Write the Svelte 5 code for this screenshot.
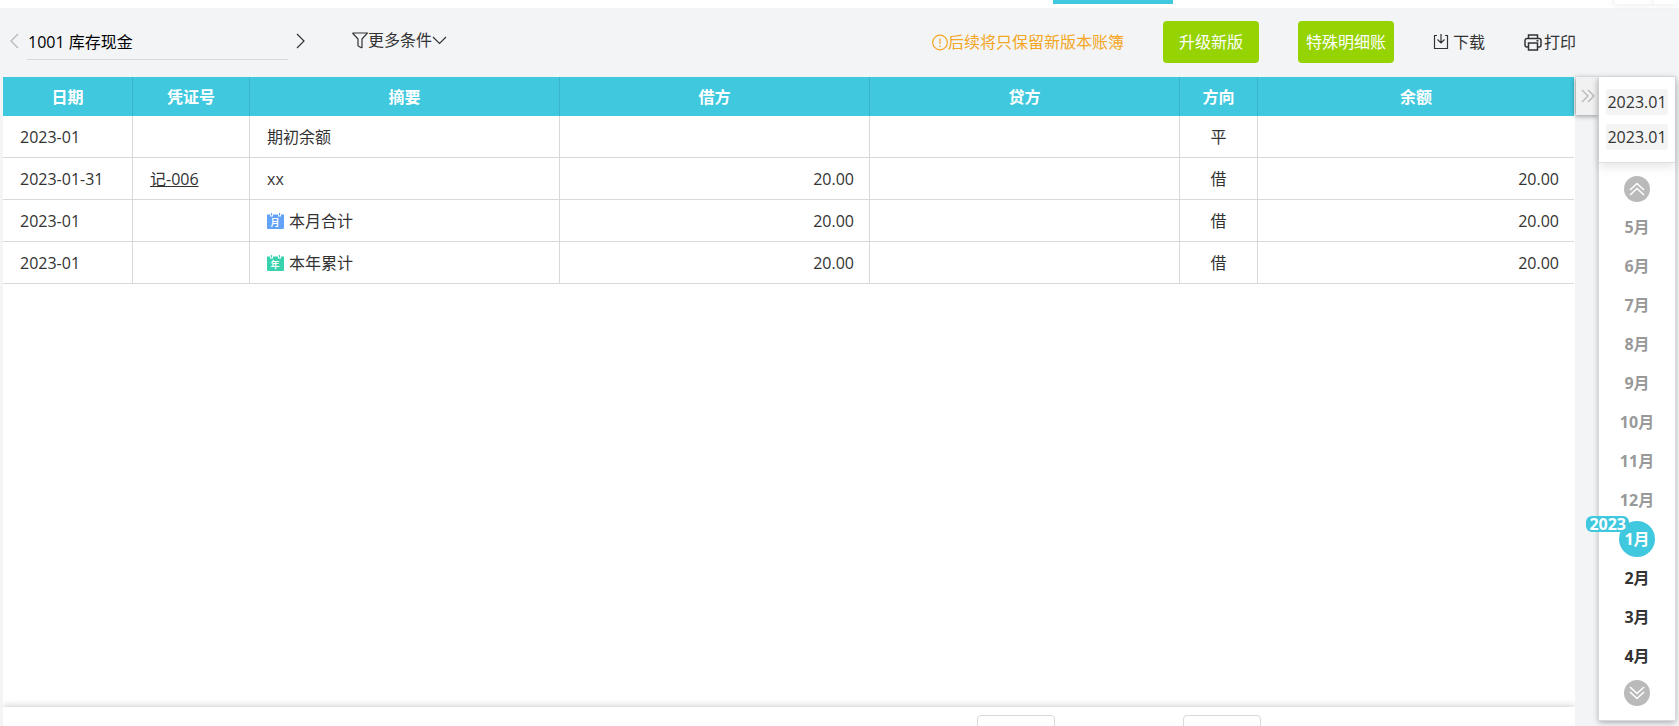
<script lang="ts">
    type Row = {
        date: string;
        voucher?: string;
        summary: string;
        badge?: "monthly" | "yearly";
        debit?: string;
        credit?: string;
        direction: string;
        balance?: string;
    };

    const rows: Row[] = [
        { date: "2023-01", summary: "期初余额", direction: "平" },
        { date: "2023-01-31", voucher: "记-006", summary: "xx", debit: "20.00", direction: "借", balance: "20.00" },
        { date: "2023-01", summary: "本月合计", badge: "monthly", debit: "20.00", direction: "借", balance: "20.00" },
        { date: "2023-01", summary: "本年累计", badge: "yearly", debit: "20.00", direction: "借", balance: "20.00" },
    ];

    const months = [5, 6, 7, 8, 9, 10, 11, 12, 1, 2, 3, 4];

    let account = $state("1001 库存现金");
    let activeMonth = $state(1);
    let railOpen = $state(true);
</script>

<div class="page">
    <div class="tabs">
        <span class="tab-line"></span>
        <span class="tab-edge"></span>
        <span class="tab-edge last"></span>
    </div>

    <header class="toolbar">
        <button class="icon-button muted" aria-label="上一个科目">
            <svg width="10" height="16" viewBox="0 0 10 16"><path d="M9 1 2 8l7 7" /></svg>
        </button>
        <input class="account" type="text" aria-label="科目" bind:value={account} />
        <button class="icon-button" aria-label="下一个科目">
            <svg width="10" height="16" viewBox="0 0 10 16"><path d="m1 1 7 7-7 7" /></svg>
        </button>
        <button class="filter">
            <svg width="16" height="17" viewBox="0 0 16 17"><path d="M.5 1h15L10 7v9M.5 1 6 7v7M6 14l4 2" /></svg>
            <span>更多条件</span>
            <svg width="15" height="9" viewBox="0 0 15 9"><path d="m1 1 6.500 6.500L14 1" /></svg>
        </button>

        <div class="actions">
            <span class="notice">
                <svg width="16" height="17" viewBox="0 0 16 17">
                    <circle cx="8" cy="8.500" r="7.300" />
                    <path d="M8 4.500v5.500M8 11.500v1.500" />
                </svg>
                <span>后续将只保留新版本账簿</span>
            </span>
            <button class="primary">升级新版</button>
            <button class="primary">特殊明细账</button>
            <button class="action download">
                <svg width="16" height="16" viewBox="0 0 16 16">
                    <path d="M4 1.500H1.500v13h13v-13H12M8 0v9M4.500 5.500 8 9l3.500-3.500" />
                </svg>
                <span>下载</span>
            </button>
            <button class="action print">
                <svg width="18" height="17" viewBox="0 0 18 17">
                    <path d="M4.500 4.500V1h9v3.500M4.500 13H3a2 2 0 0 1-2-2V6.500a2 2 0 0 1 2-2h12a2 2 0 0 1 2 2V11a2 2 0 0 1-2 2h-1.500M4.500 9h9v7h-9zM12.500 6.800h2" />
                </svg>
                <span>打印</span>
            </button>
        </div>
    </header>

    <div class="body">
        <main class="ledger">
            <div class="table-wrap">
                <table>
                    <colgroup>
                        <col class="col-date" />
                        <col class="col-voucher" />
                        <col class="col-wide" />
                        <col class="col-wide" />
                        <col class="col-wide" />
                        <col class="col-direction" />
                        <col />
                    </colgroup>
                    <thead>
                        <tr>
                            <th>日期</th>
                            <th>凭证号</th>
                            <th>摘要</th>
                            <th>借方</th>
                            <th>贷方</th>
                            <th>方向</th>
                            <th>余额</th>
                        </tr>
                    </thead>
                    <tbody>
                        {#each rows as row}
                            <tr>
                                <td>{row.date}</td>
                                <td>
                                    {#if row.voucher}
                                        <a href="#voucher">{row.voucher}</a>
                                    {/if}
                                </td>
                                <td>
                                    <div class="summary">
                                        {#if row.badge}
                                            <svg class="badge {row.badge}" width="17" height="16" viewBox="0 0 17 16">
                                                <path class="sheet" d="M0 1.500h3v2h3v-2h5v2h3v-2h3V15a1 1 0 0 1-1 1H1a1 1 0 0 1-1-1z" />
                                                <path class="ring" d="M4.500 0v2.500M12.500 0v2.500" />
                                                <text x="8" y="13" text-anchor="middle">{row.badge === "monthly" ? "月" : "年"}</text>
                                            </svg>
                                        {/if}
                                        <span>{row.summary}</span>
                                    </div>
                                </td>
                                <td class="amount">{row.debit ?? ""}</td>
                                <td class="amount">{row.credit ?? ""}</td>
                                <td class="direction">{row.direction}</td>
                                <td class="amount">{row.balance ?? ""}</td>
                            </tr>
                        {/each}
                    </tbody>
                </table>
            </div>
            <footer class="pager">
                <input type="text" aria-label="每页条数" />
                <input type="text" aria-label="页码" />
            </footer>
        </main>

        <aside class="rail">
            <button class="toggle" aria-label="收起" onclick={() => (railOpen = !railOpen)}>
                <svg width="14" height="14" viewBox="0 0 14 14"><path d="m1 1 6 6-6 6M7 1l6 6-6 6" /></svg>
            </button>
            {#if railOpen}
                <div class="periods">
                    <div class="range">
                        <button>2023.01</button>
                        <button>2023.01</button>
                    </div>
                    <div class="months">
                        <button class="scroll" aria-label="向上">
                            <svg width="16" height="14" viewBox="0 0 16 14"><path d="m1 8 7-6.500L15 8M1 13l7-6.500 7 6.500" /></svg>
                        </button>
                        <ul>
                            {#each months as month}
                                <li>
                                    <button
                                        class="month"
                                        class:past={month > 4}
                                        class:active={month === activeMonth}
                                        onclick={() => (activeMonth = month)}
                                    >{month}月</button>
                                    {#if month === 1}
                                        <span class="year">2023</span>
                                    {/if}
                                </li>
                            {/each}
                        </ul>
                        <button class="scroll" aria-label="向下">
                            <svg width="16" height="14" viewBox="0 0 16 14"><path d="m1 1 7 6.500L15 1M1 6l7 6.500L15 6" /></svg>
                        </button>
                    </div>
                </div>
            {/if}
        </aside>
    </div>
</div>

<style>
    :global(body) {
        margin: 0;
        background: #f2f4f6;
    }

    .page {
        height: 100vh;
        display: flex;
        flex-direction: column;
        overflow: hidden;
        color: #333;
        font-family: "Open Sans", "Noto Sans CJK SC", sans-serif;
        font-size: 16px;
        line-height: 24px;
    }

    button,
    input {
        box-sizing: border-box;
        margin: 0;
        padding: 0;
        border: none;
        background: none;
        color: inherit;
        font: inherit;
    }

    button {
        cursor: pointer;
    }

    svg {
        display: block;
        flex: none;
        fill: none;
        stroke: currentColor;
        stroke-width: 1.2;
    }

    .tabs {
        flex: none;
        display: flex;
        justify-content: flex-end;
        height: 8px;
        background: #fff;
    }

    .tab-line {
        width: 120px;
        height: 4px;
        margin-right: 442px;
        background: #40c8de;
    }

    .tab-edge {
        width: 39px;
        height: 4px;
        background: #fff;
        box-shadow: -2px 0 6px rgba(0, 0, 0, 0.12);
    }

    .tab-edge.last {
        width: 25px;
    }

    .toolbar {
        flex: none;
        display: flex;
        align-items: center;
        height: 69px;
        box-sizing: border-box;
        padding: 0 103px 1px 9px;
        white-space: nowrap;
    }

    .icon-button {
        padding-bottom: 2px;
    }

    .muted {
        color: #b5b5b5;
    }

    .account {
        width: 261px;
        height: 36px;
        margin: 0 8px;
        padding: 0 1px 2px;
        border-bottom: 1px solid #d9dadc;
        color: #000;
    }

    .filter {
        display: flex;
        align-items: center;
        margin-left: 46px;
        padding-bottom: 4px;
    }

    .actions {
        display: flex;
        align-items: center;
        gap: 39px;
        margin-left: auto;
    }

    .notice {
        display: flex;
        align-items: center;
        color: #f5a623;
    }

    .primary {
        height: 42px;
        min-width: 96px;
        padding: 0 8px;
        border-radius: 4px;
        background: #95d302;
        color: #fff;
    }

    .action {
        display: flex;
        align-items: center;
        gap: 4px;
    }

    .action.print {
        gap: 2px;
    }

    .print svg {
        stroke-width: 1.5;
    }

    .body {
        flex: 1;
        min-height: 0;
        display: flex;
        padding-left: 3px;
    }

    .ledger {
        flex: 1;
        min-width: 0;
        display: flex;
        flex-direction: column;
        overflow: hidden;
        background: #fff;
    }

    .table-wrap {
        flex: 1;
        min-height: 0;
        padding-right: 1px;
    }

    table {
        width: 100%;
        table-layout: fixed;
        border-collapse: separate;
        border-spacing: 0;
    }

    .col-date {
        width: 130px;
    }

    .col-voucher {
        width: 117px;
    }

    .col-wide {
        width: 310px;
    }

    .col-direction {
        width: 78px;
    }

    th,
    td {
        box-sizing: border-box;
        border-right: 1px solid #d9d9d9;
    }

    th:last-child,
    td:last-child {
        border-right: none;
    }

    th {
        height: 39px;
        padding: 0;
        border-color: #3ab4c8;
        background: #40c8de;
        color: #fff;
        font-weight: 700;
    }

    td {
        height: 42px;
        padding: 0 15px 0 17px;
        border-bottom: 1px solid #d9d9d9;
    }

    td a {
        color: inherit;
    }

    .amount {
        text-align: right;
    }

    .direction {
        padding: 0;
        text-align: center;
    }

    .summary {
        display: flex;
        align-items: center;
        gap: 5px;
    }

    .badge .sheet {
        stroke: none;
    }

    .monthly .sheet {
        fill: #62a2f7;
    }

    .monthly .ring {
        stroke: #62a2f7;
    }

    .yearly .sheet {
        fill: #38d3ae;
    }

    .yearly .ring {
        stroke: #38d3ae;
    }

    .badge text {
        fill: #fff;
        stroke: none;
        font-size: 9px;
        font-weight: 700;
    }

    .pager {
        flex: none;
        display: flex;
        justify-content: flex-end;
        gap: 128px;
        height: 19px;
        box-sizing: border-box;
        padding: 8px 314px 0 0;
        background: #fff;
        box-shadow: 0 -1px 7px rgba(0, 0, 0, 0.2);
    }

    .pager input {
        width: 78px;
        height: 36px;
        border: 1px solid #d9d9d9;
        border-radius: 4px;
    }

    .rail {
        position: relative;
        z-index: 1;
        flex: none;
        display: flex;
        align-items: flex-start;
        padding: 0 4px 0 1px;
    }

    .toggle {
        width: 23px;
        height: 38px;
        display: flex;
        align-items: center;
        justify-content: center;
        background: #f1f1f1;
        color: #b5b5b5;
        box-shadow: -1px 1px 5px rgba(0, 0, 0, 0.4);
    }

    .periods {
        position: relative;
        width: 76px;
        background: #fff;
        box-shadow: 0 0 0 1px #d8d9dc, 0 2px 6px rgba(0, 0, 0, 0.35);
    }

    .range {
        display: flex;
        flex-direction: column;
        align-items: center;
        gap: 9px;
        padding: 12px 0;
        border-bottom: 1px solid #dcdfe6;
        box-shadow: 0 4px 10px rgba(0, 0, 0, 0.1);
    }

    .range button {
        width: 62px;
        height: 26px;
        border-radius: 3px;
        background: #f4f4f4;
    }

    .months {
        display: flex;
        flex-direction: column;
        align-items: center;
        gap: 5px;
        padding: 13px 0 14px;
    }

    .scroll {
        width: 26px;
        height: 26px;
        display: flex;
        align-items: center;
        justify-content: center;
        border-radius: 50%;
        background: #bababa;
        color: #fff;
    }

    .scroll svg {
        stroke-width: 1.6;
    }

    ul {
        margin: 0;
        padding: 0;
        list-style: none;
    }

    li {
        position: relative;
        display: flex;
        align-items: center;
        justify-content: center;
        height: 39px;
    }

    .month {
        width: 36px;
        height: 36px;
        border-radius: 50%;
        font-weight: 700;
        white-space: nowrap;
        display: flex;
        align-items: center;
        justify-content: center;
    }

    .month.past {
        color: #999;
    }

    .month.active {
        background: #40c8de;
        color: #fff;
    }

    .year {
        position: absolute;
        top: -3px;
        right: 26px;
        padding: 0 3px;
        border-radius: 6px;
        background: #40c8de;
        color: #fff;
        font-weight: 700;
        line-height: 16px;
    }
</style>
